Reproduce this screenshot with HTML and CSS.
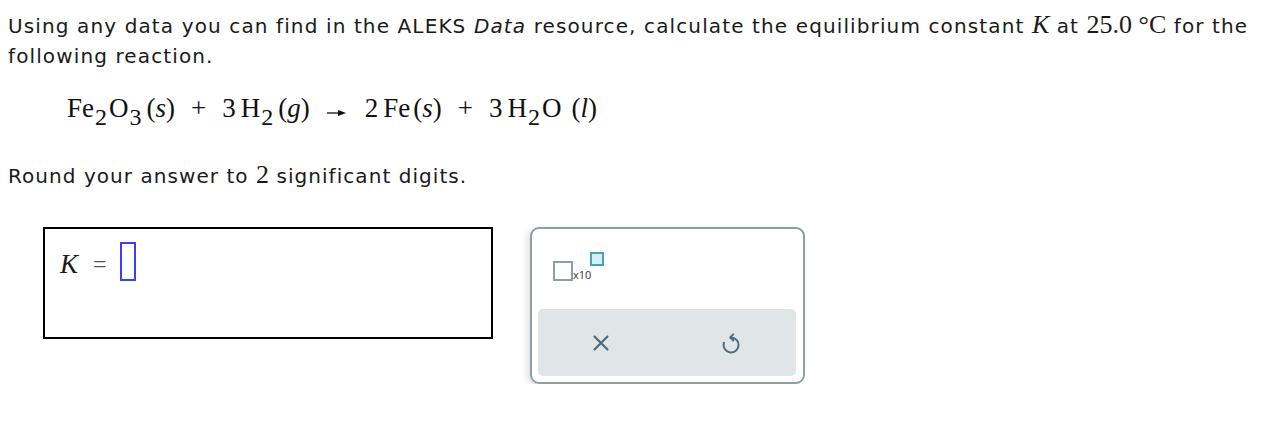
FILE: index.html
```html
<!DOCTYPE html>
<html>
<head>
<meta charset="utf-8">
<link rel="stylesheet" href="styles.css">
</head>
<body>
<div class="page">
  <p class="prompt">Using any data you can find in the ALEKS <i>Data</i> resource, calculate the equilibrium constant <span class="math mi">K</span> at <span class="math">25.0 °C</span> for the<br>following reaction.</p>
  <div class="eq">
    <span class="term">Fe<sub>2</sub>O<sub>3</sub><span class="ph">(<i>s</i>)</span></span>
    <span class="op">+</span>
    <span class="term">3<span class="thin"></span>H<sub>2</sub><span class="ph">(<i>g</i>)</span></span>
    <span class="arrow"><svg width="20" height="8" viewBox="0 0 20 8"><path d="M0 4H13" stroke="#111" stroke-width="1.3"/><path d="M11 1L19 4L11 7Z" fill="#111"/></svg></span>
    <span class="term">2<span class="thin"></span>Fe<span class="ph">(<i>s</i>)</span></span>
    <span class="op">+</span>
    <span class="term">3<span class="thin"></span>H<sub>2</sub>O<span class="ph sp">(<i>l</i>)</span></span>
  </div>
  <p class="round">Round your answer to <span class="math two">2</span> significant digits.</p>
  <div class="answer-row">
    <div class="answer">
      <span class="math mi k">K</span>
      <span class="math eqsign">=</span>
      <span class="slot"></span>
    </div>
    <div class="pad">
      <div class="pad-top">
        <span class="sci">
          <span class="base"></span><span class="x10">x10</span><span class="exp"></span>
        </span>
      </div>
      <div class="pad-bottom">
        <svg class="ico" width="20" height="20" viewBox="0 0 20 20"><path d="M3.5 3.5L16.5 16.5M16.5 3.5L3.5 16.5" stroke="#4d6b78" stroke-width="2.2" stroke-linecap="round"/></svg>
        <svg class="ico" width="24" height="24" viewBox="0 0 24 24"><path d="M12 6.5A7.5 7.5 0 1 1 4.9 11.8" fill="none" stroke="#4d6b78" stroke-width="2" stroke-linecap="round"/><path d="M14.2 3.4L11.2 6.5L14.4 9.5" fill="none" stroke="#4d6b78" stroke-width="2" stroke-linecap="round" stroke-linejoin="round"/></svg>
      </div>
    </div>
  </div>
</div>
</body>
</html>
```
FILE: styles.css
```css
html, body { margin: 0; padding: 0; background: #fff; }
body { font-family: Verdana, "DejaVu Sans", sans-serif; color: #1a1a1a; }
.page { padding: 11px 8px 0 8px; }
.prompt { margin: 0; font-size: 20px; line-height: 30px; width: 1256px; letter-spacing: 1.12px; }
.math { font-family: "Liberation Serif", "Times New Roman", serif; font-size: 26px; line-height: 1; letter-spacing: 0; }
.mi { font-style: italic; }
.eq { margin: 20px 0 0 59px; display: flex; align-items: baseline; font-family: "Liberation Serif", "Times New Roman", serif; font-size: 27px; line-height: 34px; height: 40px; color: #111; }
.eq sub { font-size: 24px; position: relative; top: 8px; vertical-align: baseline; margin: 0 2px 0 1px; line-height: 1; }
.ph { margin-left: 3px; }
.ph i { font-style: italic; }
.sp { margin-left: 10px; }
.thin { display: inline-block; width: 5px; }
.op { margin: 0 16px; }
.arrow { margin: 0 18px 0 17px; display: inline-flex; align-self: center; position: relative; top: 2px; }
.round { margin: 30px 0 0 0; font-size: 20px; line-height: 30px; letter-spacing: 1.05px; }
.answer-row { display: flex; gap: 37px; margin: 36px 0 0 35px; align-items: flex-start; }
.answer { width: 450px; height: 112px; border: 2px solid #000; display: flex; align-items: flex-start; padding: 20px 0 0 15px; box-sizing: border-box; }
.k { font-size: 27px; line-height: 30px; }
.eqsign { font-size: 24px; line-height: 30px; margin-left: 15px; color: #555; }
.slot { width: 16px; height: 39px; border: 2px solid #3d3dff; margin-left: 13px; box-sizing: border-box; margin-top: -7px; }
.pad { width: 275px; height: 157px; border: 2px solid #8c9ea6; border-radius: 9px; box-sizing: border-box; box-shadow: -3px 2px 6px rgba(0,0,0,0.12); padding: 0 7px 6px 6px; display: flex; flex-direction: column; }
.pad-top { height: 80px; padding: 23px 0 0 15px; box-sizing: border-box; }
.sci { display: inline-flex; align-items: flex-start; position: relative; }
.base { width: 20px; height: 20px; border: 2px solid #8c9ea6; box-sizing: border-box; display: inline-block; margin-top: 9px; }
.x10 { font-family: "Open Sans", "DejaVu Sans", sans-serif; font-size: 11px; color: #333; line-height: 11px; margin-top: 17px; }
.exp { width: 14px; height: 14px; border: 2px solid #4aa1b8; background: #d3eef5; box-sizing: border-box; display: inline-block; position: absolute; left: 37px; top: 0; }
.pad-bottom { flex: 1; background: #e0e5e7; border-radius: 5px; display: flex; justify-content: space-between; align-items: center; padding: 0 53px 0 53px; }
.ico { display: block; }
```
